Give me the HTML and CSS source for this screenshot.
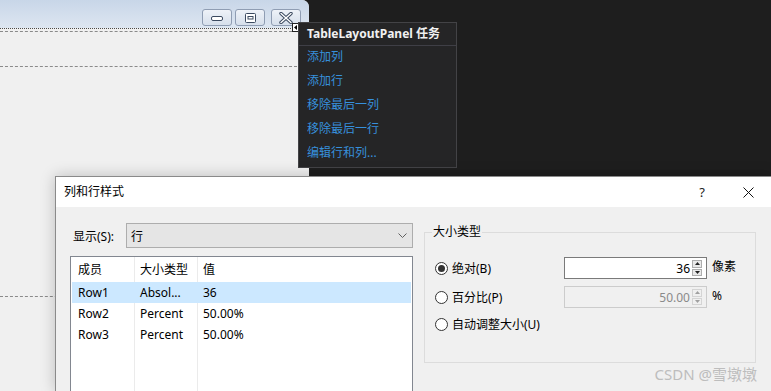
FILE: index.html
```html
<!DOCTYPE html>
<html lang="zh-CN">
<head>
<meta charset="utf-8">
<title>列和行样式</title>
<link rel="stylesheet" href="styles.css">
</head>
<body>
<div class="ide">
  <div class="form">
    <div class="form-title">
      <span class="wbtn">
        <svg width="12" height="6" viewBox="0 0 12 6"><rect x="0.5" y="0.5" width="11" height="4" rx="1.5" fill="#fff" stroke="#3b4a60"/></svg>
      </span>
      <span class="wbtn">
        <svg width="11" height="10" viewBox="0 0 11 10"><rect x="0.5" y="0.5" width="10" height="9" rx="1" fill="#fff" stroke="#3b4a60"/><rect x="3" y="3.5" width="5" height="2.5" fill="none" stroke="#3b4a60"/></svg>
      </span>
      <span class="wbtn close">
        <svg width="14" height="12" viewBox="0 0 14 12"><path d="M2 1.5 L12 10.5 M12 1.5 L2 10.5" stroke="#3b4a60" stroke-width="3.4" stroke-linecap="round"/><path d="M2 1.5 L12 10.5 M12 1.5 L2 10.5" stroke="#fff" stroke-width="1.4" stroke-linecap="round"/></svg>
      </span>
    </div>
    <div class="form-client">
      <div class="tlp">
        <div class="tlp-row r1"></div>
        <div class="tlp-row r2"></div>
        <div class="tlp-row r3"></div>
      </div>
    </div>
  </div>

  <span class="smarttag">
    <svg width="7" height="9" viewBox="0 0 7 9"><rect x="0.5" y="0.5" width="6" height="8" fill="#fff" stroke="#222"/><path d="M5 2 L2 4.5 L5 7 Z" fill="#000"/></svg>
  </span>

  <div class="tasks">
    <div class="tasks-head">TableLayoutPanel 任务</div>
    <div class="task">添加列</div>
    <div class="task">添加行</div>
    <div class="task">移除最后一列</div>
    <div class="task">移除最后一行</div>
    <div class="task">编辑行和列...</div>
  </div>

  <div class="dialog">
    <div class="dlg-title">
      <span class="dlg-caption">列和行样式</span>
      <span class="dlg-btn help">?</span>
      <span class="dlg-btn">
        <svg width="11" height="11" viewBox="0 0 11 11"><path d="M0.5 0.5 L10.5 10.5 M10.5 0.5 L0.5 10.5" stroke="#111" stroke-width="1"/></svg>
      </span>
    </div>
    <div class="dlg-body">
      <div class="left">
        <div class="show-row">
          <span class="show-label">显示(S):</span>
          <div class="combo">
            <span>行</span>
            <svg class="chev" width="9" height="5" viewBox="0 0 9 5"><path d="M0.5 0.5 L4.5 4.5 L8.5 0.5" fill="none" stroke="#606060"/></svg>
          </div>
        </div>
        <div class="list">
          <div class="lrow lhead"><span>成员</span><span>大小类型</span><span>值</span></div>
          <div class="lrow sel"><span>Row1</span><span>Absol...</span><span>36</span></div>
          <div class="lrow"><span>Row2</span><span>Percent</span><span>50.00%</span></div>
          <div class="lrow"><span>Row3</span><span>Percent</span><span>50.00%</span></div>
        </div>
      </div>
      <fieldset class="group">
        <legend>大小类型</legend>
        <div class="opts">
          <label class="opt"><span class="radio on"></span>绝对(B)</label>
          <div class="num">
            <span class="v">36</span>
            <span class="spin">
              <span><svg width="5" height="3" viewBox="0 0 5 3"><path d="M0 3 L2.5 0 L5 3 Z" fill="#222"/></svg></span>
              <span><svg width="5" height="3" viewBox="0 0 5 3"><path d="M0 0 L2.5 3 L5 0 Z" fill="#222"/></svg></span>
            </span>
          </div>
          <span class="unit up">像素</span>

          <label class="opt"><span class="radio"></span>百分比(P)</label>
          <div class="num dis">
            <span class="v">50.00</span>
            <span class="spin">
              <span><svg width="5" height="3" viewBox="0 0 5 3"><path d="M0 3 L2.5 0 L5 3 Z" fill="#a0a0a0"/></svg></span>
              <span><svg width="5" height="3" viewBox="0 0 5 3"><path d="M0 0 L2.5 3 L5 0 Z" fill="#a0a0a0"/></svg></span>
            </span>
          </div>
          <span class="unit up">%</span>

          <label class="opt wide"><span class="radio"></span>自动调整大小(U)</label>
        </div>
      </fieldset>
    </div>
  </div>

  <div class="watermark">CSDN @雪墩墩</div>
</div>
</body>
</html>
```

FILE: styles.css
```css
* {
  box-sizing: border-box;
}

html,
body {
  margin: 0;
  padding: 0;
}

body {
  font-family: "Noto Sans", "Noto Sans CJK SC", sans-serif;
  font-size: 12px;
  color: #000;
  background: #1e1e1e;
}

.ide {
  position: relative;
  width: 771px;
  height: 391px;
  overflow: hidden;
  background: #1e1e1e;
}

/* designer form */
.form {
  width: 309px;
  height: 391px;
  background: #f0f0f0;
  border-top-right-radius: 7px;
  overflow: hidden;
}

.form-title {
  height: 28px;
  background: linear-gradient(#c8d6e8, #dde6f1);
  display: flex;
  justify-content: flex-end;
  align-items: flex-start;
  gap: 3px;
  padding: 9px 8px 0 0;
}

.wbtn {
  width: 30px;
  height: 17px;
  border: 1px solid #8f9db3;
  border-radius: 3px;
  background: linear-gradient(#eef2f8, #d6dfeb);
  display: flex;
  align-items: center;
  justify-content: center;
}

.wbtn:first-child svg {
  margin-top: 3px;
}

.wbtn.close {
  margin-left: 3px;
}

.form-client {
  border-top: 1px dotted #4a4a4a;
  padding-top: 2px;
}

.tlp {
  width: 302px;
  border-top: 1px dashed #8a8a8a;
}

.tlp-row {
  border-bottom: 1px dashed #8a8a8a;
}

.r1 {
  height: 35px;
}

.r2 {
  height: 230px;
}

.r3 {
  height: 230px;
}

.smarttag {
  position: absolute;
  left: 292px;
  top: 23px;
  width: 7px;
  height: 9px;
  display: block;
  line-height: 0;
}

/* smart tag panel */
.tasks {
  position: absolute;
  left: 298px;
  top: 22px;
  width: 159px;
  height: 146px;
  background: #252526;
  border: 1px solid #434346;
}

.tasks-head {
  height: 23px;
  line-height: 21px;
  padding-left: 8px;
  font-weight: bold;
  color: #f1f1f1;
  border-bottom: 1px solid #3f3f46;
}

.task {
  height: 24px;
  line-height: 22px;
  padding-left: 8px;
  color: #3790dc;
}

/* dialog */
.dialog {
  position: absolute;
  left: 55px;
  top: 176px;
  width: 716px;
  height: 215px;
  border-top: 1px solid #8a8a8a;
  border-left: 1px solid #8a8a8a;
  background: #f0f0f0;
  box-shadow: 0 0 14px rgba(0, 0, 0, 0.22);
}

.dlg-title {
  height: 30px;
  background: #fff;
  display: flex;
  align-items: center;
  padding-left: 8px;
}

.dlg-caption {
  flex: 1;
  line-height: 16px;
}

.dlg-btn {
  width: 46px;
  height: 30px;
  display: flex;
  align-items: center;
  justify-content: center;
}

.dlg-btn.help {
  font-size: 13px;
  color: #222;
}

.dlg-body {
  display: flex;
  gap: 11px;
  padding: 16px 0 0 14px;
}

.left {
  width: 343px;
  flex: none;
}

.show-row {
  display: flex;
  align-items: center;
  height: 25px;
}

.show-label {
  width: 56px;
  padding-left: 3px;
  flex: none;
}

.combo {
  flex: 1;
  height: 25px;
  background: #e5e5e5;
  border: 1px solid #adadad;
  display: flex;
  align-items: center;
  padding: 0 5px 0 4px;
}

.chev {
  margin-left: auto;
}

.list {
  margin-top: 8px;
  height: 170px;
  border: 1px solid #828790;
  background:
    linear-gradient(90deg,
      transparent 63px, #ebebeb 63px, #ebebeb 64px,
      transparent 64px, transparent 126px, #ebebeb 126px, #ebebeb 127px,
      transparent 127px) #fff;
}

.lrow {
  display: grid;
  grid-template-columns: 63px 63px 1fr;
  height: 21px;
  line-height: 21px;
}

.lrow span:nth-child(1) {
  padding-left: 7px;
}

.lrow span:nth-child(2) {
  padding-left: 6px;
}

.lrow span:nth-child(3) {
  padding-left: 6px;
}

.lhead {
  height: 25px;
  line-height: 25px;
}

.sel {
  background: #cce8ff;
  box-shadow: inset 1px 0 #fff, inset -1px 0 #fff;
}

.group {
  width: 332px;
  height: 139px;
  margin: 1px 0 0 0;
  padding: 0 0 0 7px;
  border: 1px solid #dcdcdc;
  min-width: 0;
  flex: none;
}

.group legend {
  padding: 0 1px;
  line-height: 16px;
  font-size: 12px;
}

.opts {
  display: grid;
  grid-template-columns: 132px 143px auto;
  grid-template-rows: 26px 26px 22px;
  row-gap: 3px;
  column-gap: 0;
  margin-top: 15px;
}

.opt {
  display: flex;
  align-items: center;
  gap: 4px;
  padding-left: 3px;
}

.opt.wide {
  grid-column: 1 / -1;
}

.radio {
  width: 13px;
  height: 13px;
  border-radius: 50%;
  border: 1px solid #333;
  background: #fff;
  display: flex;
  align-items: center;
  justify-content: center;
  flex: none;
}

.radio.on::after {
  content: "";
  width: 7px;
  height: 7px;
  border-radius: 50%;
  background: #333;
}

.num {
  height: 22px;
  align-self: center;
  border: 1px solid #7a7a7a;
  background: #fff;
  display: flex;
  align-items: center;
  justify-content: flex-end;
  padding-right: 4px;
}

.num .v {
  margin-right: 2px;
}

.num.dis {
  border-color: #cccccc;
  background: #f0f0f0;
  color: #8a8a8a;
}

.spin {
  width: 10px;
  height: 16px;
  display: flex;
  flex-direction: column;
  gap: 1px;
}

.spin span {
  flex: 1;
  border: 1px solid #adadad;
  background: #e9e9e9;
  display: flex;
  align-items: center;
  justify-content: center;
  line-height: 0;
}

.num.dis .spin span {
  border-color: #d4d4d4;
  background: #f0f0f0;
}

.unit {
  align-self: center;
  margin-left: 5px;
}

.unit.up {
  margin-top: -4px;
}

.watermark {
  position: absolute;
  right: 14px;
  top: 364px;
  font-size: 15px;
  line-height: 20px;
  color: #bdbdbd;
  font-family: "Noto Sans", "Noto Sans CJK SC", sans-serif;
}
```
